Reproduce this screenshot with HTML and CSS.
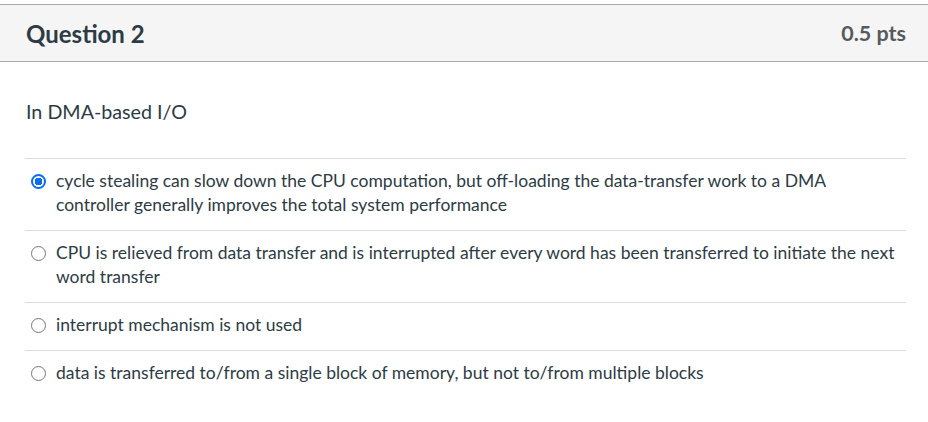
FILE: index.html
```html
<!DOCTYPE html>
<html lang="en">
<head>
<meta charset="utf-8">
<title>Question 2</title>
<link rel="stylesheet" href="styles.css">
</head>
<body>
<div class="question">
  <div class="q-header">
    <h2 class="q-name">Question 2</h2>
    <span class="q-points">0.5 pts</span>
  </div>
  <div class="q-body">
    <p class="q-text">In DMA-based I/O</p>
    <div class="answers">
      <label class="answer">
        <span class="radio checked"></span>
        <span class="answer-text">cycle stealing can slow down the CPU computation, but off-loading the data-transfer work to a DMA controller generally improves the total system performance</span>
      </label>
      <label class="answer">
        <span class="radio"></span>
        <span class="answer-text">CPU is relieved from data transfer and is interrupted after every word has been transferred to initiate the next word transfer</span>
      </label>
      <label class="answer">
        <span class="radio"></span>
        <span class="answer-text">interrupt mechanism is not used</span>
      </label>
      <label class="answer">
        <span class="radio"></span>
        <span class="answer-text">data is transferred to/from a single block of memory, but not to/from multiple blocks</span>
      </label>
    </div>
  </div>
</div>
</body>
</html>
```
FILE: styles.css
```css
html, body {
  margin: 0;
  padding: 0;
  background: #fff;
}
body {
  font-family: Lato, "Open Sans", sans-serif;
  color: #2d3b45;
  padding-top: 4px;
}
.q-header {
  display: flex;
  justify-content: space-between;
  align-items: center;
  background: #f5f5f5;
  border-top: 1px solid #aaaaaa;
  border-bottom: 1px solid #aaaaaa;
  height: 56px;
  padding: 0 22px 0 26px;
}
.q-name {
  margin: 0;
  font-size: 24px;
  font-weight: 700;
  color: #2d3b45;
}
.q-points {
  font-size: 21.5px;
  font-weight: 700;
  color: #555a5e;
}
.q-body {
  padding: 0 22px 0 25px;
}
.q-text {
  margin: 36px 0 0 1px;
  font-size: 19.7px;
  line-height: 28px;
}
.answers {
  margin-top: 32px;
}
.answer {
  display: flex;
  align-items: flex-start;
  border-top: 1px solid #dddddd;
  padding: 10px 0 13px 0;
  font-size: 17.5px;
  line-height: 24px;
}
.radio {
  flex: none;
  width: 15px;
  height: 15px;
  box-sizing: border-box;
  border: 1px solid #767676;
  border-radius: 50%;
  margin: 5px 10px 0 6px;
  background: #fff;
}
.radio.checked {
  border: 2px solid #0a6cf5;
  background: radial-gradient(circle, #0a6cf5 0 3.6px, #fff 4px);
}
.answer-text {
  flex: 1;
  padding-right: 8px;
}
```
